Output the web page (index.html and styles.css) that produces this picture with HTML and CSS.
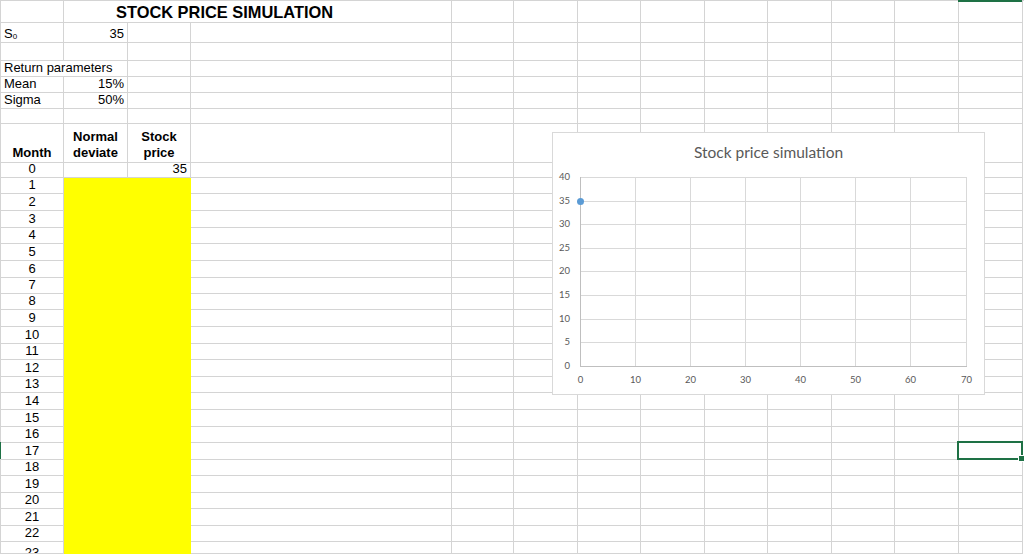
FILE: index.html
```html
<!DOCTYPE html>
<html>
<head>
<meta charset="utf-8">
<title>Stock price simulation</title>
<link rel="stylesheet" href="styles.css">
</head>
<body>
<div class="sheet">
  <!-- row 1 -->
  <div class="c"></div><div class="c title">STOCK PRICE SIMULATION</div><div class="c"></div><div class="c"></div><div class="c"></div><div class="c"></div><div class="c"></div><div class="c"></div><div class="c"></div><div class="c"></div><div class="c colsel"></div>
  <!-- row 2 -->
  <div class="c">S<sub>0</sub></div><div class="c r">35</div><div class="c"></div><div class="c"></div><div class="c"></div><div class="c"></div><div class="c"></div><div class="c"></div><div class="c"></div><div class="c"></div><div class="c"></div><div class="c"></div><div class="c"></div>
  <!-- row 3 -->
  <div class="c"></div><div class="c"></div><div class="c"></div><div class="c"></div><div class="c"></div><div class="c"></div><div class="c"></div><div class="c"></div><div class="c"></div><div class="c"></div><div class="c"></div><div class="c"></div><div class="c"></div>
  <!-- row 4 -->
  <div class="c span2">Return parameters</div><div class="c"></div><div class="c"></div><div class="c"></div><div class="c"></div><div class="c"></div><div class="c"></div><div class="c"></div><div class="c"></div><div class="c"></div><div class="c"></div><div class="c"></div>
  <!-- row 5 -->
  <div class="c">Mean</div><div class="c r">15%</div><div class="c"></div><div class="c"></div><div class="c"></div><div class="c"></div><div class="c"></div><div class="c"></div><div class="c"></div><div class="c"></div><div class="c"></div><div class="c"></div><div class="c"></div>
  <!-- row 6 -->
  <div class="c">Sigma</div><div class="c r">50%</div><div class="c"></div><div class="c"></div><div class="c"></div><div class="c"></div><div class="c"></div><div class="c"></div><div class="c"></div><div class="c"></div><div class="c"></div><div class="c"></div><div class="c"></div>
  <!-- row 7 -->
  <div class="c"></div><div class="c"></div><div class="c"></div><div class="c"></div><div class="c"></div><div class="c"></div><div class="c"></div><div class="c"></div><div class="c"></div><div class="c"></div><div class="c"></div><div class="c"></div><div class="c"></div>
  <!-- row 8 -->
  <div class="c hd">Month</div><div class="c hd">Normal<br>deviate</div><div class="c hd">Stock<br>price</div><div class="c"></div><div class="c"></div><div class="c"></div><div class="c"></div><div class="c"></div><div class="c"></div><div class="c"></div><div class="c"></div><div class="c"></div><div class="c"></div>
  <!-- row 9 -->
  <div class="c m">0</div><div class="c"></div><div class="c r">35</div><div class="c"></div><div class="c"></div><div class="c"></div><div class="c"></div><div class="c"></div><div class="c"></div><div class="c"></div><div class="c"></div><div class="c"></div><div class="c"></div>
  <!-- months 1..23 -->
  <div class="c m">1</div><div class="c y"></div><div class="c y"></div><div class="c"></div><div class="c"></div><div class="c"></div><div class="c"></div><div class="c"></div><div class="c"></div><div class="c"></div><div class="c"></div><div class="c"></div><div class="c"></div>
  <div class="c m">2</div><div class="c y"></div><div class="c y"></div><div class="c"></div><div class="c"></div><div class="c"></div><div class="c"></div><div class="c"></div><div class="c"></div><div class="c"></div><div class="c"></div><div class="c"></div><div class="c"></div>
  <div class="c m">3</div><div class="c y"></div><div class="c y"></div><div class="c"></div><div class="c"></div><div class="c"></div><div class="c"></div><div class="c"></div><div class="c"></div><div class="c"></div><div class="c"></div><div class="c"></div><div class="c"></div>
  <div class="c m">4</div><div class="c y"></div><div class="c y"></div><div class="c"></div><div class="c"></div><div class="c"></div><div class="c"></div><div class="c"></div><div class="c"></div><div class="c"></div><div class="c"></div><div class="c"></div><div class="c"></div>
  <div class="c m">5</div><div class="c y"></div><div class="c y"></div><div class="c"></div><div class="c"></div><div class="c"></div><div class="c"></div><div class="c"></div><div class="c"></div><div class="c"></div><div class="c"></div><div class="c"></div><div class="c"></div>
  <div class="c m">6</div><div class="c y"></div><div class="c y"></div><div class="c"></div><div class="c"></div><div class="c"></div><div class="c"></div><div class="c"></div><div class="c"></div><div class="c"></div><div class="c"></div><div class="c"></div><div class="c"></div>
  <div class="c m">7</div><div class="c y"></div><div class="c y"></div><div class="c"></div><div class="c"></div><div class="c"></div><div class="c"></div><div class="c"></div><div class="c"></div><div class="c"></div><div class="c"></div><div class="c"></div><div class="c"></div>
  <div class="c m">8</div><div class="c y"></div><div class="c y"></div><div class="c"></div><div class="c"></div><div class="c"></div><div class="c"></div><div class="c"></div><div class="c"></div><div class="c"></div><div class="c"></div><div class="c"></div><div class="c"></div>
  <div class="c m">9</div><div class="c y"></div><div class="c y"></div><div class="c"></div><div class="c"></div><div class="c"></div><div class="c"></div><div class="c"></div><div class="c"></div><div class="c"></div><div class="c"></div><div class="c"></div><div class="c"></div>
  <div class="c m">10</div><div class="c y"></div><div class="c y"></div><div class="c"></div><div class="c"></div><div class="c"></div><div class="c"></div><div class="c"></div><div class="c"></div><div class="c"></div><div class="c"></div><div class="c"></div><div class="c"></div>
  <div class="c m">11</div><div class="c y"></div><div class="c y"></div><div class="c"></div><div class="c"></div><div class="c"></div><div class="c"></div><div class="c"></div><div class="c"></div><div class="c"></div><div class="c"></div><div class="c"></div><div class="c"></div>
  <div class="c m">12</div><div class="c y"></div><div class="c y"></div><div class="c"></div><div class="c"></div><div class="c"></div><div class="c"></div><div class="c"></div><div class="c"></div><div class="c"></div><div class="c"></div><div class="c"></div><div class="c"></div>
  <div class="c m">13</div><div class="c y"></div><div class="c y"></div><div class="c"></div><div class="c"></div><div class="c"></div><div class="c"></div><div class="c"></div><div class="c"></div><div class="c"></div><div class="c"></div><div class="c"></div><div class="c"></div>
  <div class="c m">14</div><div class="c y"></div><div class="c y"></div><div class="c"></div><div class="c"></div><div class="c"></div><div class="c"></div><div class="c"></div><div class="c"></div><div class="c"></div><div class="c"></div><div class="c"></div><div class="c"></div>
  <div class="c m">15</div><div class="c y"></div><div class="c y"></div><div class="c"></div><div class="c"></div><div class="c"></div><div class="c"></div><div class="c"></div><div class="c"></div><div class="c"></div><div class="c"></div><div class="c"></div><div class="c"></div>
  <div class="c m">16</div><div class="c y"></div><div class="c y"></div><div class="c"></div><div class="c"></div><div class="c"></div><div class="c"></div><div class="c"></div><div class="c"></div><div class="c"></div><div class="c"></div><div class="c"></div><div class="c"></div>
  <div class="c m rowsel">17</div><div class="c y"></div><div class="c y"></div><div class="c"></div><div class="c"></div><div class="c"></div><div class="c"></div><div class="c"></div><div class="c"></div><div class="c"></div><div class="c"></div><div class="c"></div><div class="c active"><span class="handle"></span></div>
  <div class="c m">18</div><div class="c y"></div><div class="c y"></div><div class="c"></div><div class="c"></div><div class="c"></div><div class="c"></div><div class="c"></div><div class="c"></div><div class="c"></div><div class="c"></div><div class="c"></div><div class="c"></div>
  <div class="c m">19</div><div class="c y"></div><div class="c y"></div><div class="c"></div><div class="c"></div><div class="c"></div><div class="c"></div><div class="c"></div><div class="c"></div><div class="c"></div><div class="c"></div><div class="c"></div><div class="c"></div>
  <div class="c m">20</div><div class="c y"></div><div class="c y"></div><div class="c"></div><div class="c"></div><div class="c"></div><div class="c"></div><div class="c"></div><div class="c"></div><div class="c"></div><div class="c"></div><div class="c"></div><div class="c"></div>
  <div class="c m">21</div><div class="c y"></div><div class="c y"></div><div class="c"></div><div class="c"></div><div class="c"></div><div class="c"></div><div class="c"></div><div class="c"></div><div class="c"></div><div class="c"></div><div class="c"></div><div class="c"></div>
  <div class="c m">22</div><div class="c y"></div><div class="c y"></div><div class="c"></div><div class="c"></div><div class="c"></div><div class="c"></div><div class="c"></div><div class="c"></div><div class="c"></div><div class="c"></div><div class="c"></div><div class="c"></div>
  <div class="c m clip">23</div><div class="c y"></div><div class="c y"></div><div class="c"></div><div class="c"></div><div class="c"></div><div class="c"></div><div class="c"></div><div class="c"></div><div class="c"></div><div class="c"></div><div class="c"></div><div class="c"></div>

  <div class="chart">
    <div class="chart-title">Stock price simulation</div>
    <svg class="plot" width="431" height="223" viewBox="0 0 431 223">
      <g stroke="#d9d9d9" stroke-width="1" fill="none">
        <line x1="27" y1="6.5" x2="414" y2="6.5"/>
        <line x1="27" y1="30.5" x2="414" y2="30.5"/>
        <line x1="27" y1="53.5" x2="414" y2="53.5"/>
        <line x1="27" y1="77.5" x2="414" y2="77.5"/>
        <line x1="27" y1="100.5" x2="414" y2="100.5"/>
        <line x1="27" y1="124.5" x2="414" y2="124.5"/>
        <line x1="27" y1="148.5" x2="414" y2="148.5"/>
        <line x1="27" y1="171.5" x2="414" y2="171.5"/>
        <line x1="82.5" y1="6" x2="82.5" y2="196"/>
        <line x1="137.5" y1="6" x2="137.5" y2="196"/>
        <line x1="192.5" y1="6" x2="192.5" y2="196"/>
        <line x1="247.5" y1="6" x2="247.5" y2="196"/>
        <line x1="302.5" y1="6" x2="302.5" y2="196"/>
        <line x1="357.5" y1="6" x2="357.5" y2="196"/>
        <line x1="413.5" y1="6" x2="413.5" y2="196"/>
      </g>
      <g stroke="#bfbfbf" stroke-width="1">
        <line x1="27.5" y1="6" x2="27.5" y2="196"/>
        <line x1="27" y1="195.5" x2="414" y2="195.5"/>
      </g>
      <g class="lbl" text-anchor="end">
        <text x="17" y="9">40</text>
        <text x="17" y="33">35</text>
        <text x="17" y="56">30</text>
        <text x="17" y="80">25</text>
        <text x="17" y="103">20</text>
        <text x="17" y="127">15</text>
        <text x="17" y="151">10</text>
        <text x="17" y="174">5</text>
        <text x="17" y="198">0</text>
      </g>
      <g class="lbl" text-anchor="middle">
        <text x="27.5" y="212">0</text>
        <text x="82.5" y="212">10</text>
        <text x="137.5" y="212">20</text>
        <text x="192.5" y="212">30</text>
        <text x="247.5" y="212">40</text>
        <text x="302.5" y="212">50</text>
        <text x="357.5" y="212">60</text>
        <text x="413.5" y="212">70</text>
      </g>
      <circle cx="27.5" cy="30.5" r="3.5" fill="#5b9bd5"/>
    </svg>
  </div>
</div>
</body>
</html>
```

FILE: styles.css
```css
html, body {
  margin: 0;
  padding: 0;
  background: #ffffff;
  overflow: hidden;
}

body {
  width: 1024px;
  height: 555px;
  font-family: "Liberation Sans", Arial, sans-serif;
  color: #000000;
}

.sheet {
  position: relative;
  display: grid;
  grid-template-columns: 63px 64px 63px 261px 62px 64px 63px 64px 63px 64px 63px 64px 64px;
  grid-template-rows:
    22px 20px 18px 16px 16px 16px 15px 39px 15px
    16px 17px 17px 16px 17px 17px 16px 16px 17px 17px 16px 17px
    16px 17px 17px 16px 17px 16px 17px 16px 17px 16px 12px;
  border-top: 1px solid #d4d4d4;
  border-left: 1px solid #d4d4d4;
  width: 1023px;
}

.c {
  box-sizing: border-box;
  border-right: 1px solid #d4d4d4;
  border-bottom: 1px solid #d4d4d4;
  display: flex;
  align-items: flex-end;
  padding: 0 3px 1px 3px;
  font-size: 13px;
  line-height: 15px;
  white-space: nowrap;
  position: relative;
}

.c sub {
  font-size: 8px;
  line-height: 8px;
  vertical-align: -1px;
}

.r { justify-content: flex-end; }
.m { justify-content: center; }

.title {
  grid-column: span 3;
  align-items: center;
  padding: 0 0 0 52px;
  font-size: 16.4px;
  font-weight: bold;
  line-height: 20px;
}

.span2 { grid-column: span 2; }

.hd {
  justify-content: center;
  text-align: center;
  font-weight: bold;
  line-height: 16px;
  padding-bottom: 1px;
}

.y {
  background: #ffff00;
  border-color: #ffff00;
}

.clip {
  overflow: hidden;
  align-items: flex-start;
  padding-top: 3px;
}

.colsel::before {
  content: "";
  position: absolute;
  left: -1px;
  right: 0;
  top: -1px;
  height: 2px;
  background: #1e7145;
}

.rowsel::before {
  content: "";
  position: absolute;
  left: -1px;
  top: -1px;
  bottom: 0;
  width: 1px;
  background: #1e7145;
}

.active::after {
  content: "";
  position: absolute;
  left: -2px;
  top: -2px;
  right: -1px;
  bottom: -1px;
  border: 2px solid #1e7145;
}

.handle {
  position: absolute;
  right: -3px;
  bottom: -3px;
  width: 5px;
  height: 5px;
  background: #1e7145;
  border: 1px solid #ffffff;
  z-index: 2;
}

.chart {
  position: absolute;
  left: 551px;
  top: 131px;
  width: 433px;
  height: 263px;
  box-sizing: border-box;
  border: 1px solid #d9d9d9;
  background: #ffffff;
  display: flex;
  flex-direction: column;
  z-index: 3;
}

.chart-title {
  height: 38px;
  display: flex;
  align-items: center;
  justify-content: center;
  font-family: Lato, "Open Sans", sans-serif;
  font-size: 15.5px;
  color: #595959;
}

.plot {
  display: block;
}

.lbl {
  font-family: Lato, "Open Sans", sans-serif;
  font-size: 9.5px;
  fill: #595959;
}
```
